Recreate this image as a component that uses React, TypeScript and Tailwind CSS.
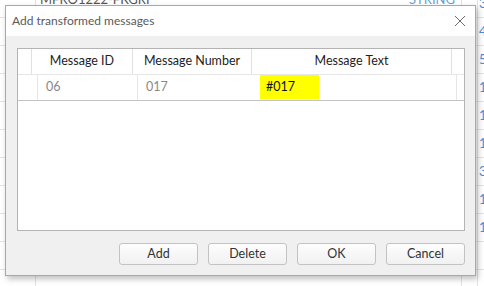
const font = { fontFamily: 'Lato, "Open Sans", sans-serif' };

const bgRows = ['3', '4', '5', '18', '1', '10', '30', '10', '12', '', ''];

function Background() {
  return (
    <div className="flex flex-col bg-white -mt-[10px]">
      {bgRows.map((num, i) => (
        <div key={i} className="flex h-[28px] border-b border-[#e3e3e3]">
          <div className="w-[36px] shrink-0 border-r border-[#e3e3e3]" />
          <div className="w-[426px] shrink-0 border-r border-[#e3e3e3] pl-1 flex items-center text-[13px] text-[#555]">
            {i === 0 && <span className="flex-1 -mt-[7px]">MFRO1222-FKGRP</span>}
            {i === 0 && <span className="text-[#6a9fd6] pr-[6px] -mt-[7px]">STRING</span>}
          </div>
          <div className="w-[16px] shrink-0 border-r border-[#e3e3e3]" />
          <div className="flex-1 min-w-0 overflow-hidden whitespace-nowrap pl-[1px] flex items-center text-[13px] text-[#4a8fd8]">{num}</div>
        </div>
      ))}
    </div>
  );
}

function Btn({ label }: { label: string }) {
  return (
    <button className="w-[79px] h-[22px] rounded-[3px] border border-[#c3c3c3] bg-gradient-to-b from-[#fdfdfd] to-[#f1f1f1] text-[12.5px] text-[#333] leading-none">
      {label}
    </button>
  );
}

export default function App() {
  return (
    <div className="relative w-[484px] h-[286px] overflow-hidden bg-white" style={font}>
      <Background />
      <div className="absolute left-[5px] top-[5px] w-[471px] h-[271px] flex flex-col border border-[#a8a8a8] bg-[#f0f0f0] shadow-[2px_3px_6px_rgba(0,0,0,0.25)]">
        <div className="h-[30px] bg-white flex items-center justify-between pl-[6px] pr-[9px]">
          <span className="text-[12px] text-[#5a5a5a]">Add transformed messages</span>
          <svg width="12" height="12" viewBox="0 0 12 12" className="stroke-[#6b6b6b]">
            <path d="M1 1L11 11M11 1L1 11" strokeWidth="1" fill="none" />
          </svg>
        </div>
        <div className="flex-1 flex flex-col pt-[12px] pl-[11px] pr-[10px] pb-[9px]">
          <div className="h-[183px] bg-white border border-[#b4b4b4] flex flex-col text-[12.5px]">
            <div className="flex h-[26px] border-b border-[#e6e6e6]">
              <div className="w-[14px] border-r border-[#e0e0e0]" />
              <div className="w-[101px] border-r border-[#e0e0e0] flex items-center justify-center text-[#222]">Message ID</div>
              <div className="w-[119px] border-r border-[#e0e0e0] flex items-center justify-center text-[#222]">Message Number</div>
              <div className="w-[200px] border-r border-[#e0e0e0] flex items-center justify-center text-[#222]">Message Text</div>
              <div className="flex-1" />
            </div>
            <div className="flex h-[26px] border-b border-[#c4c4c4]">
              <div className="w-[20px] border-r border-[#e6e6e6]" />
              <div className="w-[100px] border-r border-[#e6e6e6] flex items-center pl-[8px] text-[#888]">06</div>
              <div className="w-[120px] flex items-center pl-[8px] text-[#888]">017</div>
              <div className="w-[199px] border-r border-[#e6e6e6] flex items-start pl-[2px]">
                <div className="w-[59px] h-[24px] bg-[#ffff00] flex items-center pl-[6px] text-[#111]">#017</div>
              </div>
              <div className="flex-1" />
            </div>
          </div>
          <div className="flex justify-end gap-[10px] mt-[12px]">
            <Btn label="Add" />
            <Btn label="Delete" />
            <Btn label="OK" />
            <Btn label="Cancel" />
          </div>
        </div>
      </div>
    </div>
  );
}
